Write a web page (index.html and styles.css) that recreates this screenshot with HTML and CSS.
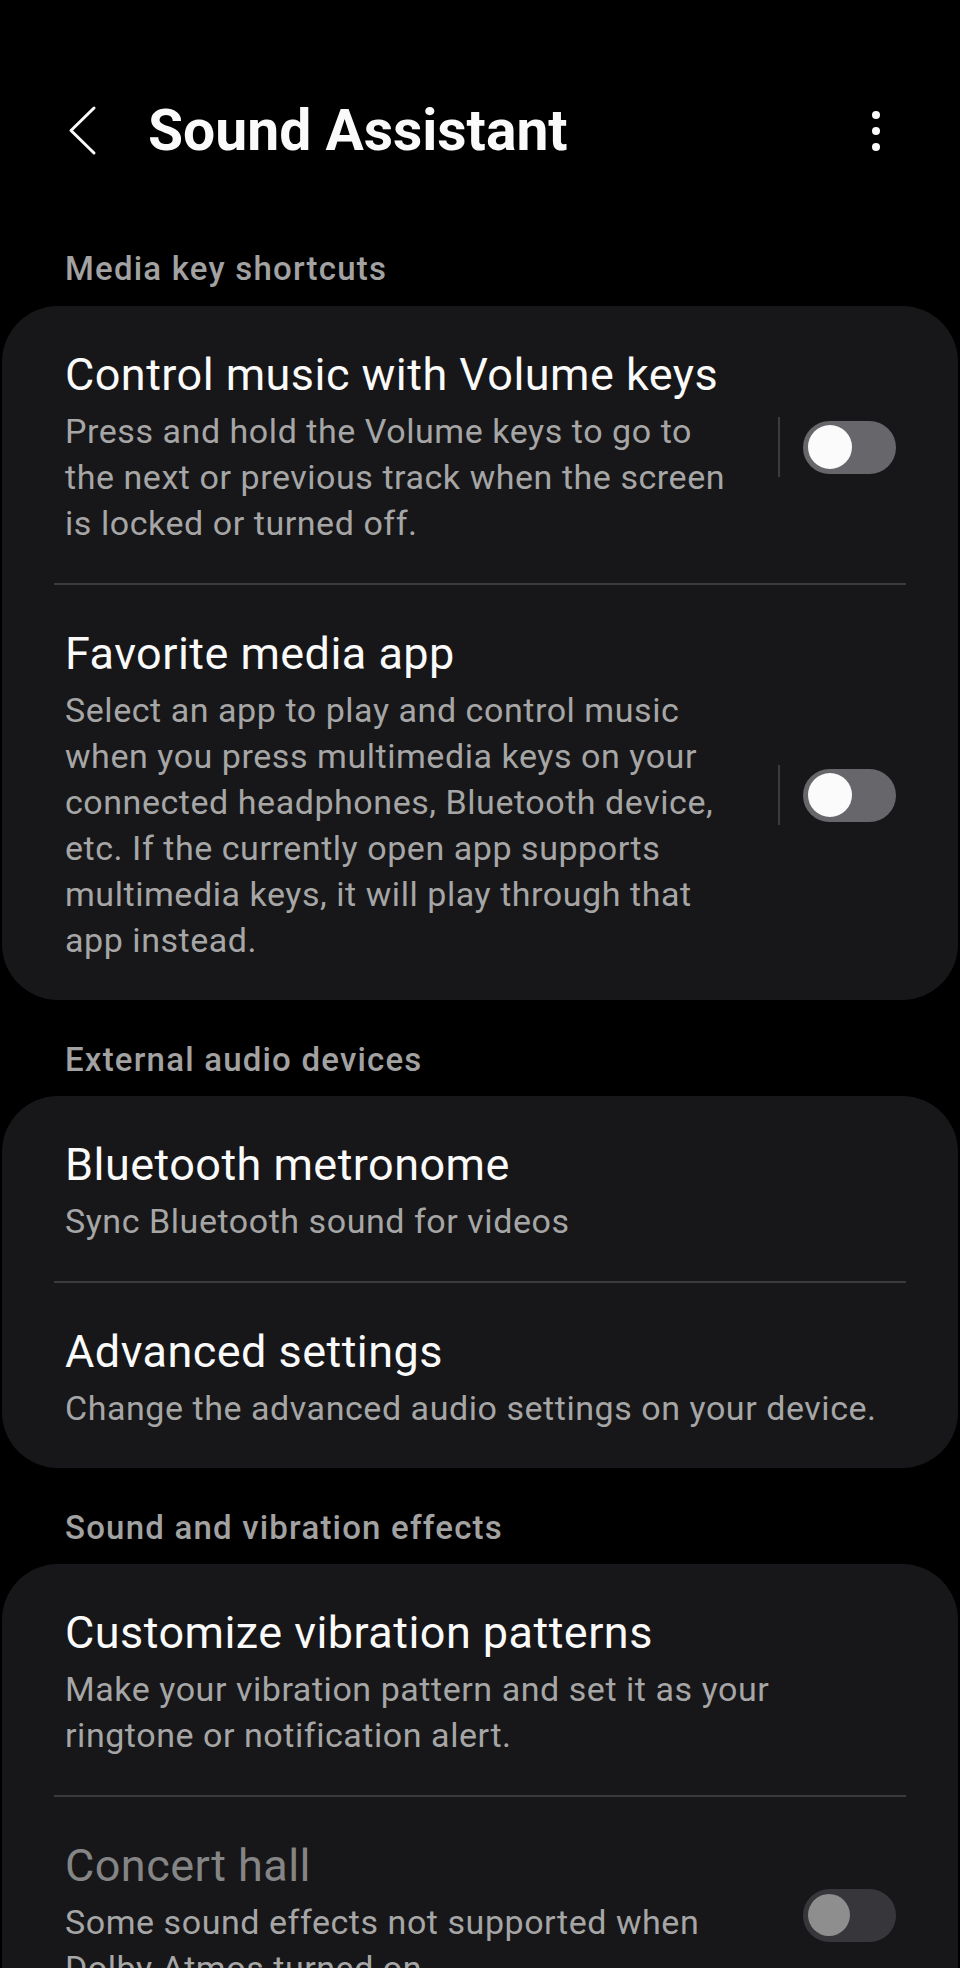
FILE: index.html
```html
<!DOCTYPE html>
<html lang="en">
<head>
<meta charset="UTF-8" />
<meta name="viewport" content="width=device-width, initial-scale=1" />
<title>Sound Assistant</title>
<link rel="stylesheet" href="styles.css">
</head>
<body>
  <div class="screen">
    <header class="topbar">
      <button class="back" aria-label="Back">
        <svg width="34" height="56" viewBox="0 0 34 56">
          <path d="M28 5 L5 27.5 L28 50" fill="none" stroke="#fafafa" stroke-width="3" stroke-linecap="round" stroke-linejoin="round" />
        </svg>
      </button>
      <h1>Sound Assistant</h1>
      <button class="more" aria-label="More options">
        <span></span><span></span><span></span>
      </button>
    </header>

    <!-- Media key shortcuts -->
    <h2 class="section">Media key shortcuts</h2>
    <div class="card">
      <div class="item">
        <div class="text">
          <div class="title">Control music with Volume keys</div>
          <div class="desc">Press and hold the Volume keys to go to the next or previous track when the screen is locked or turned off.</div>
        </div>
        <div class="divider"></div>
        <div class="switch"><span class="knob"></span></div>
      </div>
      <div class="item">
        <div class="text">
          <div class="title">Favorite media app</div>
          <div class="desc">Select an app to play and control music when you press multimedia keys on your connected headphones, Bluetooth device, etc. If the currently open app supports multimedia keys, it will play through that app instead.</div>
        </div>
        <div class="divider"></div>
        <div class="switch"><span class="knob"></span></div>
      </div>
    </div>

    <!-- External audio devices -->
    <h2 class="section">External audio devices</h2>
    <div class="card">
      <div class="item">
        <div class="text">
          <div class="title">Bluetooth metronome</div>
          <div class="desc">Sync Bluetooth sound for videos</div>
        </div>
      </div>
      <div class="item">
        <div class="text">
          <div class="title">Advanced settings</div>
          <div class="desc">Change the advanced audio settings on your device.</div>
        </div>
      </div>
    </div>

    <!-- Sound and vibration effects -->
    <h2 class="section">Sound and vibration effects</h2>
    <div class="card">
      <div class="item">
        <div class="text">
          <div class="title">Customize vibration patterns</div>
          <div class="desc">Make your vibration pattern and set it as your ringtone or notification alert.</div>
        </div>
      </div>
      <div class="item disabled">
        <div class="text">
          <div class="title">Concert hall</div>
          <div class="desc">Some sound effects not supported when Dolby Atmos turned on.</div>
        </div>
        <div class="divider hidden"></div>
        <div class="switch"><span class="knob"></span></div>
      </div>
    </div>
  </div>
</body>
</html>
```

FILE: styles.css
```css
html,
body {
  margin: 0;
  padding: 0;
  background: #000;
}
body {
  font-family: Roboto, "Noto Sans", sans-serif;
  color: #fafafa;
  overflow: hidden;
}
.screen {
  width: 960px;
  padding-top: 99px;
}
.topbar {
  display: flex;
  align-items: center;
  height: 64px;
  padding: 0 76px 0 66px;
}
.topbar button {
  background: none;
  border: none;
  padding: 0;
  cursor: pointer;
}
.back {
  width: 34px;
  height: 56px;
  display: flex;
}
.topbar h1 {
  flex: 1;
  margin: 0 0 0 48px;
  font-size: 57px;
  font-weight: 700;
  line-height: 64px;
}
.more {
  width: 16px;
  height: 48px;
  display: flex;
  flex-direction: column;
  align-items: center;
  justify-content: space-between;
  padding: 4px 0 !important;
  box-sizing: border-box;
}
.more span {
  width: 8px;
  height: 8px;
  border-radius: 50%;
  background: #fafafa;
}
.section {
  margin: 86px 0 17px 65px;
  font-size: 33px;
  font-weight: 500;
  line-height: 40px;
  letter-spacing: 1.2px;
  color: #a2a2a2;
}
.card + .section {
  margin-top: 40px;
  margin-bottom: 16px;
}
.card {
  margin: 0 2px;
  background: #171719;
  border-radius: 56px;
  padding: 0 52px;
}
.item {
  display: flex;
  align-items: center;
  padding: 42px 10px 37px 11px;
  border-top: 2px solid #3a3a3c;
}
.item:first-child {
  border-top: none;
}
.text {
  flex: 1;
  min-width: 0;
}
.title {
  font-size: 45px;
  line-height: 54px;
  letter-spacing: 0.45px;
  color: #fafafa;
}
.desc {
  margin-top: 6px;
  font-size: 34px;
  line-height: 46px;
  letter-spacing: 0.55px;
  color: #a6a6a6;
}
.divider {
  width: 2px;
  height: 60px;
  margin: 0 23px 0 36px;
  background: #3c3c3e;
}
.divider.hidden {
  visibility: hidden;
}
.switch {
  width: 93px;
  height: 53px;
  border-radius: 27px;
  background: #67676b;
  display: flex;
  align-items: center;
  padding-left: 5px;
  box-sizing: border-box;
}
.knob {
  width: 44px;
  height: 44px;
  border-radius: 50%;
  background: #fbfbfb;
}
.disabled .title {
  color: #858585;
}
.disabled .switch {
  background: #37373b;
}
.disabled .knob {
  width: 42px;
  height: 42px;
  background: #8e8e8e;
}
```
